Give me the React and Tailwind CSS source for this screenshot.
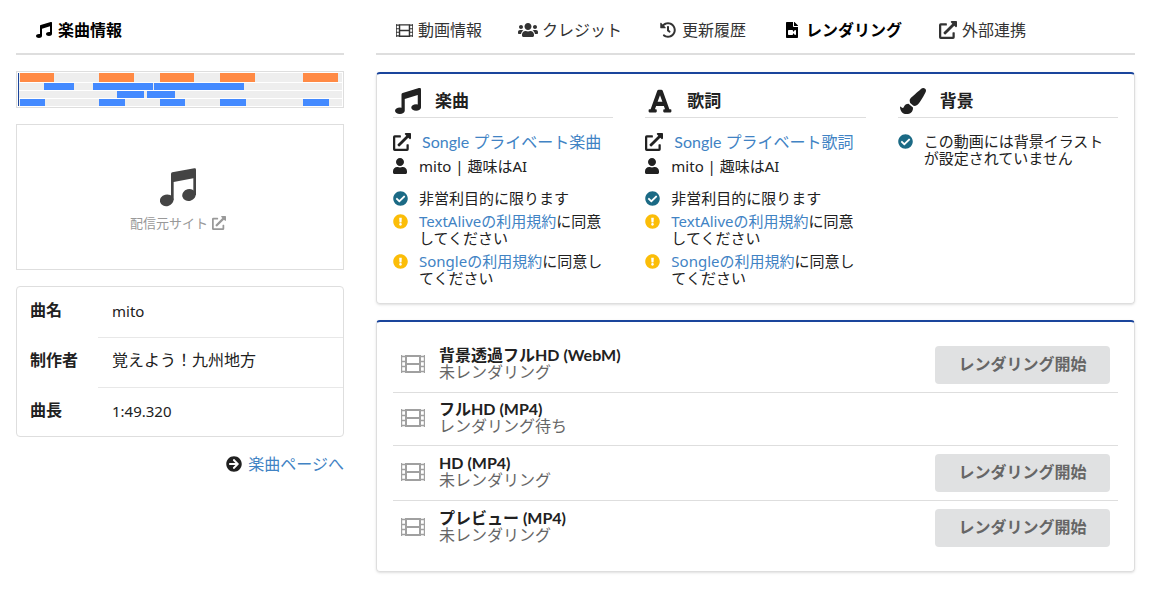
import React, { useState } from 'react'
import {
  FaArrowCircleRight,
  FaCheckCircle,
  FaExclamationCircle,
  FaExternalLinkAlt,
  FaFileVideo,
  FaFont,
  FaHistory,
  FaMusic,
  FaPaintBrush,
  FaUser,
  FaUsers,
} from 'react-icons/fa'

const tabs = [
  { id: 'video', label: '動画情報', icon: <FilmIcon className="w-[17px] h-[13px]" /> },
  { id: 'credit', label: 'クレジット', icon: <FaUsers className="w-5 h-4" /> },
  { id: 'history', label: '更新履歴', icon: <FaHistory className="w-4 h-4" /> },
  { id: 'render', label: 'レンダリング', icon: <FaFileVideo className="w-4 h-4" /> },
  { id: 'external', label: '外部連携', icon: <FaExternalLinkAlt className="w-[18px] h-[18px]" /> },
]

const formats = [
  { name: '背景透過フルHD (WebM)', status: '未レンダリング', ready: true },
  { name: 'フルHD (MP4)', status: 'レンダリング待ち', ready: false },
  { name: 'HD (MP4)', status: '未レンダリング', ready: true },
  { name: 'プレビュー (MP4)', status: '未レンダリング', ready: true },
]

// [start, length] of every repeated section, one row per group
const segments = [
  { y: 1, h: 9, color: '#ff8a45', items: [[3, 34], [82, 35], [143, 34], [203, 35], [286, 35]] },
  { y: 11, h: 7, color: '#448aff', items: [[27, 30], [76, 60], [137, 90]] },
  { y: 19, h: 7, color: '#448aff', items: [[100, 27], [130, 28]] },
  { y: 27, h: 7, color: '#448aff', items: [[3, 25], [82, 26], [143, 25], [203, 26], [286, 26]] },
]

export default function App() {
  const [tab, setTab] = useState('render')

  return (
    <div className="flex gap-8 pl-4 pr-[35px] pb-6 bg-white text-base text-[#212121] font-[Lato,'Noto_Sans_CJK_JP',sans-serif]">
      <aside className="w-[328px] shrink-0">
        <h2 className="flex items-center gap-1 px-[18px] pt-[18px] pb-[11px] border-b-2 border-[#dedede] leading-6 font-bold text-black">
          <span className="w-5 flex justify-center"><FaMusic className="w-4 h-4" /></span>
          楽曲情報
        </h2>
        <SongMap />

        <div className="mt-4 h-[146px] pt-1 pr-1 border border-[#dedede] flex flex-col items-center justify-center gap-2">
          <NoteIcon />
          <a href="#source" className="flex items-center gap-1 text-[13px] leading-4 text-[#999]">
            配信元サイト
            <FaExternalLinkAlt className="w-[14px] h-[14px]" />
          </a>
        </div>

        <div className="mt-4 border border-[#dedede] rounded">
          <table className="w-full text-left">
            <tbody>
              <InfoRow label="曲名" value="mito" latin />
              <InfoRow label="制作者" value="覚えよう！九州地方" />
              <InfoRow label="曲長" value="1:49.320" latin />
            </tbody>
          </table>
        </div>

        <div className="mt-[15px] flex items-center justify-end gap-[6px] leading-6">
          <FaArrowCircleRight className="w-4 h-4" />
          <a href="#song" className="text-[#4183c4]">楽曲ページへ</a>
        </div>
      </aside>

      <main className="flex-1 min-w-0">
        <nav className="flex border-b-2 border-[#dedede]">
          {tabs.map((t) => (
            <button
              key={t.id}
              onClick={() => setTab(t.id)}
              className={`flex items-center gap-1 px-[18px] pt-[18px] pb-[11px] leading-6 whitespace-nowrap ${tab === t.id ? 'font-bold text-black' : 'text-[#333]'}`}
            >
              <span className="w-5 flex justify-center">{t.icon}</span>
              {t.label}
            </button>
          ))}
        </nav>

        <section className="mt-[17px] px-4 pt-3 pb-4 border border-t-2 border-[#dedede] border-t-[#1a459c] rounded shadow-sm grid grid-cols-3 gap-8">
          <div>
            <ColumnTitle icon={<FaMusic className="w-7 h-[26px]" />} title="楽曲" />
            <Source title="Songle プライベート楽曲" />
            <Terms />
          </div>
          <div>
            <ColumnTitle icon={<FaFont className="w-7 h-[26px]" />} title="歌詞" />
            <Source title="Songle プライベート歌詞" />
            <Terms />
          </div>
          <div>
            <ColumnTitle icon={<FaPaintBrush className="w-7 h-[26px]" />} title="背景" />
            <ul className="mt-[15px]">
              <Term ok>この動画には背景イラストが設定されていません</Term>
            </ul>
          </div>
        </section>

        <section className="mt-4 p-4 border border-t-2 border-[#dedede] border-t-[#1a459c] rounded shadow-sm">
          <ul className="divide-y divide-[#dedede]">
            {formats.map((f) => (
              <li key={f.name} className="flex items-center px-2 py-[7px]">
                <FilmIcon className="w-6 h-[18px] mb-[2px] text-[#a0a0a0]" />
                <div className="ml-[14px] pb-1 flex-1 leading-[17px]">
                  <div className="font-bold">{f.name}</div>
                  <div className="text-[#666]">{f.status}</div>
                </div>
                {f.ready && (
                  <button className="w-[175px] h-[38px] my-px pb-[2px] rounded bg-[#e0e1e2] text-[#666] font-bold">レンダリング開始</button>
                )}
              </li>
            ))}
          </ul>
        </section>
      </main>
    </div>
  )
}

function SongMap() {
  return (
    <div className="mt-4 border border-[#dedede]">
      <svg viewBox="0 0 326 35" preserveAspectRatio="none" className="block w-full h-[35px]" shapeRendering="crispEdges">
        {segments.map((row) => (
          <g key={row.y}>
            <rect x="2" y={row.y} width="323" height={row.h} fill="#eeeeee" />
            {row.items.map(([x, w]) => (
              <rect key={x} x={x} y={row.y} width={w} height={row.h} fill={row.color} />
            ))}
          </g>
        ))}
        <rect x="1" y="1" width="1" height="33" fill="#1a459c" />
      </svg>
    </div>
  )
}

function InfoRow({ label, value, latin }) {
  return (
    <tr className="group h-[50px] last:h-[49px] leading-6">
      <th scope="row" className="w-[81px] pl-[13px] pb-1 font-bold">{label}</th>
      <td className={`pl-[14px] border-b border-[#e8e8e8] group-last:border-b-0 ${latin ? "pb-[2px] text-[15px] font-['Noto_Sans',sans-serif]" : 'pb-1'}`}>
        {value}
      </td>
    </tr>
  )
}

function ColumnTitle({ icon, title }) {
  return (
    <h3 className="flex items-center gap-[13px] h-8 pb-[2px] border-b border-[#dedede] text-[17px] font-bold">
      <span className="w-7 ml-px">{icon}</span>
      {title}
    </h3>
  )
}

function Source({ title }) {
  return (
    <div className="mt-3 leading-6">
      <div className="flex items-center gap-[11px]">
        <FaExternalLinkAlt className="w-[18px] h-[18px]" />
        <a href="#songle" className="text-[#4183c4] whitespace-nowrap">{title}</a>
      </div>
      <div className="flex items-center gap-3 text-[15px] font-['Noto_Sans','Noto_Sans_CJK_JP',sans-serif]">
        <FaUser className="w-[14px] h-4" />
        mito | 趣味はAI
      </div>
    </div>
  )
}

function Terms() {
  return (
    <ul className="mt-3 space-y-[6px]">
      <Term ok>非営利目的に限ります</Term>
      <Term><a href="#textalive" className="text-[#4183c4]">TextAliveの利用規約</a>に同意してください</Term>
      <Term><a href="#terms" className="text-[#4183c4]">Songleの利用規約</a>に同意してください</Term>
    </ul>
  )
}

function Term({ ok, children }) {
  return (
    <li className="flex gap-[11px] text-[15px] leading-[17px] font-['Noto_Sans','Noto_Sans_CJK_JP',sans-serif]">
      {ok ? (
        <FaCheckCircle className="shrink-0 w-[15px] h-[17px] text-[#1b6a85]" />
      ) : (
        <FaExclamationCircle className="shrink-0 w-[15px] h-[17px] text-[#fbbd08]" />
      )}
      <p className="break-all">{children}</p>
    </li>
  )
}

function NoteIcon() {
  return (
    <svg viewBox="0 0 108 117" className="w-9 h-[39px]" fill="#444">
      <path d="M33 18q0-4 4-5L103 1q5-1 5 4v76h-8V31L41 42v55h-8z" />
      <ellipse cx="20" cy="97" rx="20.500" ry="17.500" transform="rotate(-15 20 97)" />
      <ellipse cx="87" cy="81" rx="20.500" ry="17.500" transform="rotate(-15 87 81)" />
    </svg>
  )
}

function FilmIcon({ className }) {
  return (
    <svg viewBox="0 0 24 18" className={className} fill="none" stroke="currentColor">
      <path strokeWidth="1.200" d="M.6 0v18M23.400 0v18" />
      <path strokeWidth="2" d="M5 0v18M19 0v18M4 1h16M4 17h16M5 9h14" />
      <path strokeWidth="1.700" d="M0 1.500h5M0 6.500h5M0 11.500h5M0 16.500h5M19 1.500h5M19 6.500h5M19 11.500h5M19 16.500h5" />
    </svg>
  )
}
